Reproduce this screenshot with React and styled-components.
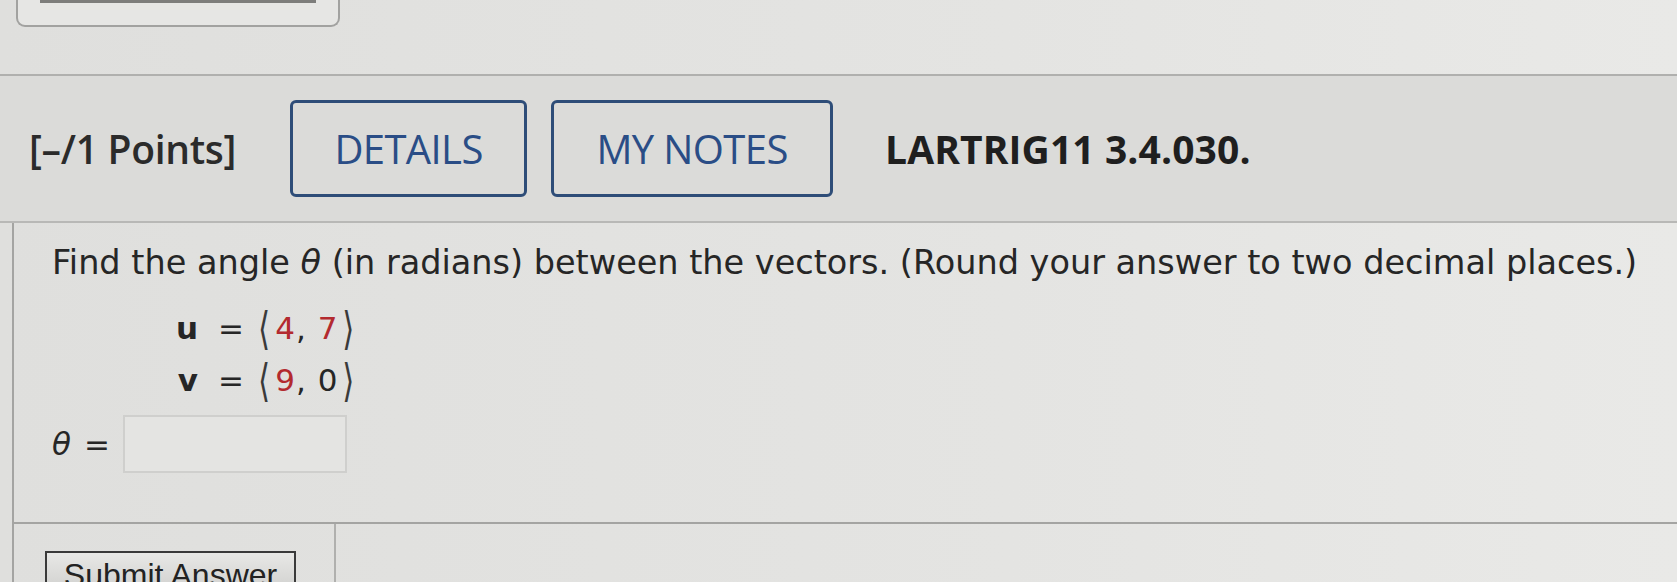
import React from 'react';
import styled, { createGlobalStyle } from 'styled-components';

const GlobalStyle = createGlobalStyle`
  html, body {
    margin: 0;
    padding: 0;
    background: #e2e2e0;
  }
`;

const Page = styled.div`
  width: 1677px;
  height: 582px;
  overflow: hidden;
  background: linear-gradient(90deg, #dfdfdd 0%, #e4e4e2 60%, #e9e9e7 100%);
`;

const TopStrip = styled.div`
  height: 74px;
  padding-left: 16px;
`;

const PrevCard = styled.div`
  width: 324px;
  height: 27px;
  box-sizing: border-box;
  border: 2px solid #a2a2a0;
  border-top: none;
  border-radius: 0 0 9px 9px;
  background: #e6e6e4;
  padding: 0 22px;
`;

const PrevCardBar = styled.div`
  height: 3px;
  background: #7d7d7b;
`;

const Header = styled.div`
  display: flex;
  align-items: center;
  height: 145px;
  padding-left: 29px;
  border-top: 2px solid #b0b0ae;
  border-bottom: 2px solid #b8b8b6;
  background: #dbdbd9;
  font-family: "Open Sans", "Liberation Sans", sans-serif;
`;

const Points = styled.span`
  font-size: 39px;
  font-weight: 600;
  color: #2b2b2b;
  margin-right: 54px;
  letter-spacing: -0.3px;
`;

const HeaderButton = styled.button`
  width: ${p => p.$w}px;
  height: 97px;
  margin-right: ${p => p.$gap}px;
  border: 3px solid #2e4d78;
  border-radius: 6px;
  background: transparent;
  color: #2a4d86;
  font-family: "Open Sans", "Liberation Sans", sans-serif;
  font-size: 40px;
  font-weight: 500;
  letter-spacing: -0.6px;
  padding: 0;
`;

const Code = styled.span`
  font-size: 39px;
  font-weight: 700;
  color: #1f1f1f;
  letter-spacing: 0.1px;
`;

const Body = styled.div`
  margin-left: 12px;
  height: 299px;
  padding: 20px 0 0 38px;
  box-sizing: border-box;
  border-left: 2px solid #a4a4a2;
  font-family: "DejaVu Sans", Verdana, sans-serif;
  color: #262626;
`;

const Question = styled.p`
  margin: 0;
  font-size: 33.5px;
  line-height: 40px;
  white-space: nowrap;
`;

const Theta = styled.i`
  font-family: "DejaVu Sans", Verdana, sans-serif;
`;

const Vectors = styled.div`
  margin: 21px 0 0 124px;
  display: inline-grid;
  grid-template-columns: auto auto auto;
  row-gap: 4px;
  font-size: 31px;
  line-height: 48px;
`;

const VecName = styled.b`
  justify-self: end;
  margin-right: 20px;
`;

const Equals = styled.span`
  margin-right: 10px;
`;

const Angle = styled.span`
  color: #262626;
  letter-spacing: 1px;
`;

/* tall angle brackets around the components */
const Bracket = styled.span`
  display: inline-block;
  transform: scaleY(1.45);
  color: #3a3a3a;
  margin: 0 4px;
`;

const Num = styled.span`
  color: #b32a2f;
`;

const AnswerRow = styled.div`
  display: flex;
  align-items: center;
  gap: 13px;
  margin-top: 11px;
  font-size: 31px;
`;

const AnswerBox = styled.div`
  width: 220px;
  height: 54px;
  border: 2px solid #cfcfcd;
  background: #e4e4e2;
`;

const Footer = styled.div`
  display: flex;
  margin-left: 12px;
  height: 60px;
  border-top: 2px solid #a4a4a2;
  border-left: 2px solid #a4a4a2;
`;

const SubmitCell = styled.div`
  width: 322px;
  padding: 27px 0 0 31px;
  box-sizing: border-box;
  border-right: 2px solid #b0b0ae;
`;

const SubmitButton = styled.button`
  width: 251px;
  height: 44px;
  border: 2px solid #3a3a3a;
  background: linear-gradient(#e8e8e6, #cfcfcd);
  font-family: "Liberation Sans", Arial, sans-serif;
  font-size: 32px;
  color: #222;
  padding: 3px 0 0;
  line-height: 34px;
  text-align: center;
  white-space: nowrap;
`;

const Vector = ({ a, b, redB }) => (
  <Angle>
    <Bracket>⟨</Bracket>
    <Num>{a}</Num>, {redB ? <Num>{b}</Num> : b}
    <Bracket>⟩</Bracket>
  </Angle>
);

export default function App() {
  return (
    <>
      <GlobalStyle />
      <Page>
        <TopStrip>
          <PrevCard>
            <PrevCardBar />
          </PrevCard>
        </TopStrip>
        <Header>
          <Points>[–/1 Points]</Points>
          <HeaderButton $w={237} $gap={24}>DETAILS</HeaderButton>
          <HeaderButton $w={282} $gap={52}>MY NOTES</HeaderButton>
          <Code>LARTRIG11 3.4.030.</Code>
        </Header>
        <Body>
          <Question>
            Find the angle <Theta>θ</Theta> (in radians) between the vectors. (Round your answer to two decimal places.)
          </Question>
          <Vectors>
            <VecName>u</VecName>
            <Equals>=</Equals>
            <Vector a="4" b="7" redB />
            <VecName>v</VecName>
            <Equals>=</Equals>
            <Vector a="9" b="0" />
          </Vectors>
          <AnswerRow>
            <Theta>θ</Theta>
            <span>=</span>
            <AnswerBox />
          </AnswerRow>
        </Body>
        <Footer>
          <SubmitCell>
            <SubmitButton>Submit Answer</SubmitButton>
          </SubmitCell>
        </Footer>
      </Page>
    </>
  );
}
